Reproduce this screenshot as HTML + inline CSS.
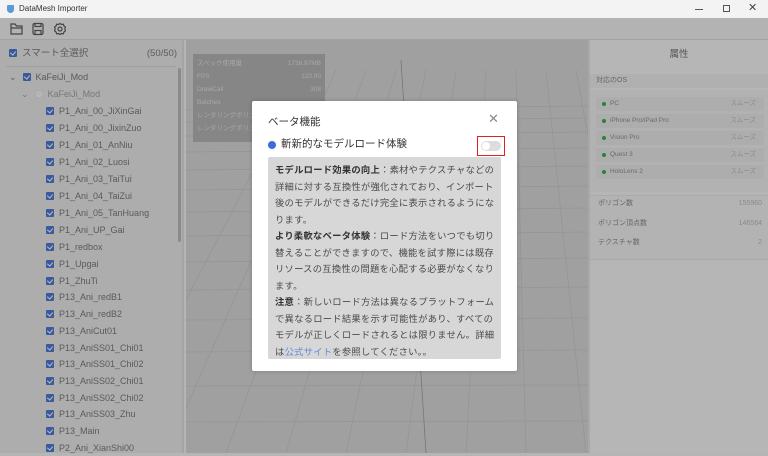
<!DOCTYPE html>
<html><head><meta charset="utf-8"><style>
*{margin:0;padding:0;box-sizing:border-box}
body{width:768px;height:453px;overflow:hidden;position:relative;background:#b5b5b5;font-family:"Liberation Sans","Noto Sans CJK JP",sans-serif;color:#555}
.abs{position:absolute}
#title{left:0;top:0;width:768px;height:18px;background:#f3f3f3;font-size:8px;color:#333}
#tool{left:0;top:18px;width:768px;height:22px;background:#b3b3b3;border-bottom:1px solid #a2a2a2}
#left{left:0;top:40px;width:184px;height:413px;background:#adadad;border-right:2px solid #a4a4a4}
.row{position:absolute;height:16px;font-size:9px;color:#5a5a5a;white-space:nowrap;line-height:16px}
.cb{display:inline-block;width:8px;height:8px;background:#3a5a9e;border-radius:1px;vertical-align:-1px;margin-right:5px;position:relative}
.cb:after{content:"";position:absolute;left:2px;top:1px;width:3px;height:4px;border:solid #bbb;border-width:0 1px 1px 0;transform:rotate(40deg)}
#view{left:186px;top:40px;width:402px;height:413px;background:#a0a0a0;overflow:hidden}
#right{left:588px;top:40px;width:180px;height:413px;background:#b6b6b6;border-left:2px solid #a8a8a8}
.os{position:absolute;left:6px;width:168px;height:14px;background:#adadad;font-size:6.5px;color:#6a6a6a;line-height:14px;padding-left:14px}
.os:before{content:"";position:absolute;left:6px;top:5px;width:4px;height:4px;border-radius:50%;background:#2f7f3a}
.os span{position:absolute;right:8px;color:#8a8a8a}
.pr{position:absolute;left:8px;width:164px;font-size:7px;color:#666;height:17px;line-height:17px}
.pr span{position:absolute;right:0;color:#8a8a8a}
#modal{left:252px;top:101px;width:265px;height:270px;background:#fff;border-radius:2px;box-shadow:0 0 4px rgba(0,0,0,.2)}
#box{position:absolute;left:16px;top:56px;width:233px;height:202px;background:#d7d7d7;border-radius:2px;padding:5px 6px 0 7px;font-size:9.3px;line-height:16.5px;color:#4a4a4a;letter-spacing:0.25px}
b{color:#333}
</style></head><body>
<div id="title" class="abs">
 <div class="abs" style="left:7px;top:5px;width:7px;height:8px;background:#5b9bd5;border-radius:1px 1px 4px 4px"></div>
 <div class="abs" style="left:19px;top:4px">DataMesh Importer</div>
 <div class="abs" style="left:695px;top:9px;width:8px;border-top:1px solid #555"></div>
 <div class="abs" style="left:723px;top:5px;width:7px;height:7px;border:1px solid #555"></div>
 <div class="abs" style="left:748px;top:1px;font-size:11px;color:#444">✕</div>
</div>
<div id="tool" class="abs">
 <svg class="abs" style="left:10px;top:4px" width="60" height="14" fill="none" stroke="#444" stroke-width="1.2">
  <path d="M1 2h4l1.5 2H12v8H1z M1 6h11"/>
  <rect x="23" y="1.5" width="10" height="11" rx="1.5"/><path d="M25 1.5v3h6v-3 M25 12.5v-4h6v4"/>
  <circle cx="50" cy="7" r="2"/><path d="M50 1.5l1.5 1 1.8-.3.6 1.7 1.5 1.2-.6 1.9.6 1.9-1.5 1.2-.6 1.7-1.8-.3-1.5 1-1.5-1-1.8.3-.6-1.7-1.5-1.2.6-1.9-.6-1.9 1.5-1.2.6-1.7 1.8.3z"/>
 </svg>
</div>
<div id="left" class="abs">
 <div class="row" style="left:9px;top:6px;font-size:9.5px;width:168px"><span class="cb"></span>スマート全選択<span style="position:absolute;right:0">(50/50)</span></div>
 <div class="abs" style="left:6px;top:26px;width:170px;border-top:1px solid #a0a0a0"></div>
 <div class="abs" style="left:178px;top:28px;width:3px;height:174px;background:#8a8a8a;border-radius:2px"></div>
 <div class="row" style="left:9px;top:29px"><span style="margin-right:6px">⌄</span><span class="cb"></span>KaFeiJi_Mod</div>
 <div class="row" style="left:21px;top:46px;color:#777"><span style="margin-right:6px">⌄</span><span class="cb" style="background:#b4b4b4;border:1px solid #a8a8a8"></span>KaFeiJi_Mod</div>
 <div class="row" style="left:46px;top:63px"><span class="cb"></span>P1_Ani_00_JiXinGai</div>
 <div class="row" style="left:46px;top:80px"><span class="cb"></span>P1_Ani_00_JixinZuo</div>
 <div class="row" style="left:46px;top:97px"><span class="cb"></span>P1_Ani_01_AnNiu</div>
 <div class="row" style="left:46px;top:114px"><span class="cb"></span>P1_Ani_02_Luosi</div>
 <div class="row" style="left:46px;top:131px"><span class="cb"></span>P1_Ani_03_TaiTui</div>
 <div class="row" style="left:46px;top:148px"><span class="cb"></span>P1_Ani_04_TaiZui</div>
 <div class="row" style="left:46px;top:165px"><span class="cb"></span>P1_Ani_05_TanHuang</div>
 <div class="row" style="left:46px;top:182px"><span class="cb"></span>P1_Ani_UP_Gai</div>
 <div class="row" style="left:46px;top:199px"><span class="cb"></span>P1_redbox</div>
 <div class="row" style="left:46px;top:216px"><span class="cb"></span>P1_Upgai</div>
 <div class="row" style="left:46px;top:233px"><span class="cb"></span>P1_ZhuTi</div>
 <div class="row" style="left:46px;top:249px"><span class="cb"></span>P13_Ani_redB1</div>
 <div class="row" style="left:46px;top:266px"><span class="cb"></span>P13_Ani_redB2</div>
 <div class="row" style="left:46px;top:283px"><span class="cb"></span>P13_AniCut01</div>
 <div class="row" style="left:46px;top:300px"><span class="cb"></span>P13_AniSS01_Chi01</div>
 <div class="row" style="left:46px;top:316px"><span class="cb"></span>P13_AniSS01_Chi02</div>
 <div class="row" style="left:46px;top:333px"><span class="cb"></span>P13_AniSS02_Chi01</div>
 <div class="row" style="left:46px;top:350px"><span class="cb"></span>P13_AniSS02_Chi02</div>
 <div class="row" style="left:46px;top:366px"><span class="cb"></span>P13_AniSS03_Zhu</div>
 <div class="row" style="left:46px;top:383px"><span class="cb"></span>P13_Main</div>
 <div class="row" style="left:46px;top:400px"><span class="cb"></span>P2_Ani_XianShi00</div>
</div>
<div id="view" class="abs">
 <svg width="402" height="413" stroke="#959595" stroke-width="0.8" fill="none">
  <path d="M0 222L402 218 M0 250L402 247 M0 280L402 278 M0 312L402 310 M0 346L402 345 M0 382L402 381 M0 196L402 192 M0 172L402 168 M0 150L402 146 M0 130L402 126 M0 112L402 108 M0 96L402 92 M0 82L402 78 M0 70L402 66"/>
  <path d="M-80 413L120 30 M-20 413L150 30 M40 413L180 30 M100 413L210 30 M160 413L240 30 M220 413L270 30 M280 413L300 30 M340 413L330 30 M400 413L360 30 M460 413L390 30 M520 413L420 30"/>
  <path d="M240 413L215 20" stroke="#777"/>
 </svg>
 <div class="abs" style="left:7px;top:14px;width:132px;height:88px;background:#868686;font-size:6.5px;color:#a8a8a8;line-height:13px;padding:3px 4px">
  <div>スペック使用量<span style="float:right">1738.97MB</span></div>
  <div>FPS<span style="float:right">120.00</span></div>
  <div>DrawCall<span style="float:right">308</span></div>
  <div>Batches</div><div>レンダリングポリゴン</div><div>レンダリングポリゴン頂点</div>
 </div>
</div>
<div id="right" class="abs">
 <div class="abs" style="left:0;top:0;width:178px;height:29px;font-size:9.5px;color:#555;text-align:center;line-height:29px">属性</div>
 <div class="abs" style="left:0;top:34px;width:178px;height:14px;background:#b0b0b0;font-size:7px;color:#666;padding-left:6px;line-height:14px">対応のOS</div>
 <div class="abs" style="left:0;top:50px;width:178px;height:102px;background:#b2b2b2"></div>
 <div class="os" style="top:57px">PC<span>スムーズ</span></div>
 <div class="os" style="top:74px">iPhone Pro/iPad Pro<span>スムーズ</span></div>
 <div class="os" style="top:91px">Vision Pro<span>スムーズ</span></div>
 <div class="os" style="top:108px">Quest 3<span>スムーズ</span></div>
 <div class="os" style="top:125px">HoloLens 2<span>スムーズ</span></div>
 <div class="abs" style="left:0;top:155px;width:178px;height:65px;background:#b3b3b3;border-top:1px solid #aaa;border-bottom:1px solid #aaa"></div>
 <div class="pr" style="top:155px">ポリゴン数<span>155960</span></div>
 <div class="pr" style="top:175px">ポリゴン頂点数<span>146564</span></div>
 <div class="pr" style="top:194px">テクスチャ数<span>2</span></div>
</div>
<div id="modal" class="abs">
 <div class="abs" style="left:16px;top:13px;font-size:10.5px;color:#333">ベータ機能</div>
 <div class="abs" style="left:236px;top:10px;font-size:13px;color:#888">✕</div>
 <div class="abs" style="left:16px;top:40px;width:8px;height:8px;border-radius:50%;background:#3a6fd8"></div>
 <div class="abs" style="left:29px;top:35px;font-size:10.5px;color:#333">斬新的なモデルロード体験</div>
 <div class="abs" style="left:225px;top:35px;width:28px;height:20px;border:1.5px solid #d22"></div>
 <div class="abs" style="left:229px;top:40px;width:20px;height:10px;border-radius:5px;background:#ddd"><div style="position:absolute;left:1px;top:1px;width:8px;height:8px;border-radius:50%;background:#fff"></div></div>
 <div id="box"><b>モデルロード効果の向上</b>：素材やテクスチャなどの詳細に対する互換性が強化されており、インポート後のモデルができるだけ完全に表示されるようになります。<br><b>より柔軟なベータ体験</b>：ロード方法をいつでも切り替えることができますので、機能を試す際には既存リソースの互換性の問題を心配する必要がなくなります。<br><b>注意</b>：新しいロード方法は異なるプラットフォームで異なるロード結果を示す可能性があり、すべてのモデルが正しくロードされるとは限りません。詳細は<span style="color:#5b8fd8">公式サイト</span>を参照してください。。</div>
</div>
</body></html>
